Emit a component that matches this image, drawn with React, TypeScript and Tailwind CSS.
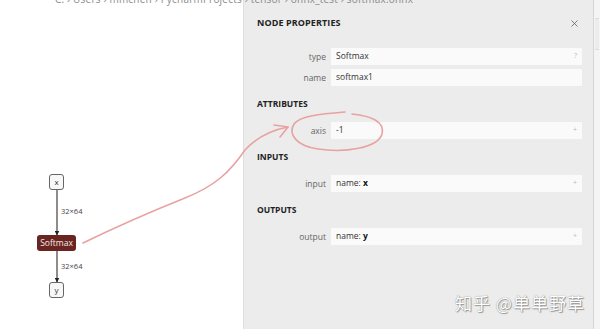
import React from "react";
import { X } from "lucide-react";

type Row = { label: string; value: React.ReactNode; mark: string };

const sections: { title?: string; rows: Row[] }[] = [
  {
    rows: [
      { label: "type", value: "Softmax", mark: "?" },
      { label: "name", value: "softmax1", mark: "" },
    ],
  },
  { title: "ATTRIBUTES", rows: [{ label: "axis", value: "-1", mark: "+" }] },
  {
    title: "INPUTS",
    rows: [
      {
        label: "input",
        value: (
          <>
            name: <b className="font-bold text-[#111]">x</b>
          </>
        ),
        mark: "+",
      },
    ],
  },
  {
    title: "OUTPUTS",
    rows: [
      {
        label: "output",
        value: (
          <>
            name: <b className="font-bold text-[#111]">y</b>
          </>
        ),
        mark: "+",
      },
    ],
  },
];

function PropRow({ row }: { row: Row }) {
  return (
    <div className="flex items-center gap-[5px]">
      <span className="w-[69px] shrink-0 text-right text-[8.5px] leading-[17px] text-[#666]">
        {row.label}
      </span>
      <div className="flex h-[17px] flex-1 items-center justify-between bg-[#fafafa] pl-[5px] pr-[5px] text-[8.5px] text-[#333]">
        <span>{row.value}</span>
        <span className="text-[7px] text-[#bbb]">{row.mark}</span>
      </div>
    </div>
  );
}

function Graph() {
  return (
    <div className="relative h-full w-[243px] shrink-0 bg-white">
      <svg className="absolute left-0 top-0" width="243" height="329">
        <defs>
          <marker id="ah" markerUnits="userSpaceOnUse" markerWidth="5" markerHeight="5" refX="4.5" refY="2.5" orient="auto">
            <path d="M0,0 L5,2.5 L0,5 z" fill="#222" />
          </marker>
        </defs>
        <line x1="57" y1="190" x2="57" y2="235" stroke="#808080" strokeWidth="1.8" markerEnd="url(#ah)" />
        <line x1="57" y1="251" x2="57" y2="282" stroke="#808080" strokeWidth="1.8" markerEnd="url(#ah)" />
      </svg>
      <div className="absolute left-[49px] top-[174px] flex h-[16px] w-[15px] items-center justify-center rounded-[3px] border border-[#666] bg-[#f8f8f8] text-[8px] text-[#333]">
        x
      </div>
      <span className="absolute left-[61px] top-[206px] text-[7.5px] text-[#444]">32×64</span>
      <div className="absolute left-[37px] top-[235px] flex h-[16px] w-[39px] items-center justify-center rounded-[3px] bg-[#6b2520] text-[8.5px] font-normal text-[#f4eaea]">
        Softmax
      </div>
      <span className="absolute left-[61px] top-[261px] text-[7.5px] text-[#444]">32×64</span>
      <div className="absolute left-[49px] top-[282px] flex h-[16px] w-[15px] items-center justify-center rounded-[3px] border border-[#666] bg-[#f8f8f8] text-[8px] text-[#333]">
        y
      </div>
    </div>
  );
}

export default function App() {
  return (
    <div className="relative flex h-[329px] w-[600px] overflow-hidden bg-white font-['Open_Sans','Noto_Sans_CJK_SC',sans-serif]">
      <Graph />
      <div className="flex flex-1 flex-col border-l border-[#dedede] bg-[#ececec] pl-[13px] pr-[11px]">
        <div className="mt-[17px] flex h-[12px] items-center justify-between">
          <span className="text-[9px] font-bold tracking-[0.1px] text-[#222]">NODE PROPERTIES</span>
          <X size={11} strokeWidth={1.6} className="mr-[2px] text-[#555]" />
        </div>
        <div className="mt-[19px] flex flex-col gap-[4px]">
          {sections[0].rows.map((r) => (
            <PropRow key={r.label} row={r} />
          ))}
        </div>
        {sections.slice(1).map((s) => (
          <div key={s.title}>
            <div className="mt-[12px] h-[12px] text-[8.5px] font-bold leading-[12px] text-[#222]">
              {s.title}
            </div>
            <div className="mt-[12px]">
              {s.rows.map((r) => (
                <PropRow key={r.label} row={r} />
              ))}
            </div>
          </div>
        ))}
      </div>
      <div className="flex w-[7px] shrink-0 flex-col border-l border-[#d6d6d6] bg-[#f4f4f4] pt-[18px]">
        <div className="mx-[1px] h-[32px] border-y border-[#dcdcdc] bg-[#ececec]" />
      </div>

      {/* breadcrumb, mostly scrolled off the top */}
      <div className="absolute left-[55px] top-[-7px] whitespace-nowrap text-[10px] leading-[12px] tracking-[0.2px] text-[#8a8a8a]">
        C: › Users › mmchen › PycharmProjects › tensor › onnx_test › softmax.onnx
      </div>

      {/* hand-drawn annotation */}
      <svg className="pointer-events-none absolute left-0 top-0" width="600" height="329">
        <g fill="none" stroke="#e8a2a2" strokeWidth="1.6" strokeLinecap="round" strokeLinejoin="round">
          <path d="M83,243 C120,225 150,212 185,198 C215,186 230,172 245,150 C258,136 272,130 288,127" />
          <path d="M274,125 L288,127 L280,137" />
          <path d="M345,112 C320,114 300,116 294,124 C288,134 296,146 318,149 C345,153 378,148 382,134 C385,122 372,116 352,114" />
        </g>
      </svg>

      {/* watermark */}
      <div className="absolute left-[455px] top-[293px] font-['Noto_Sans_CJK_SC',sans-serif] text-[17px] leading-[20px] tracking-[1px] text-white [text-shadow:0_0_1px_#777,1px_1px_1px_#999]">
        知乎 @单单野草
      </div>
    </div>
  );
}
